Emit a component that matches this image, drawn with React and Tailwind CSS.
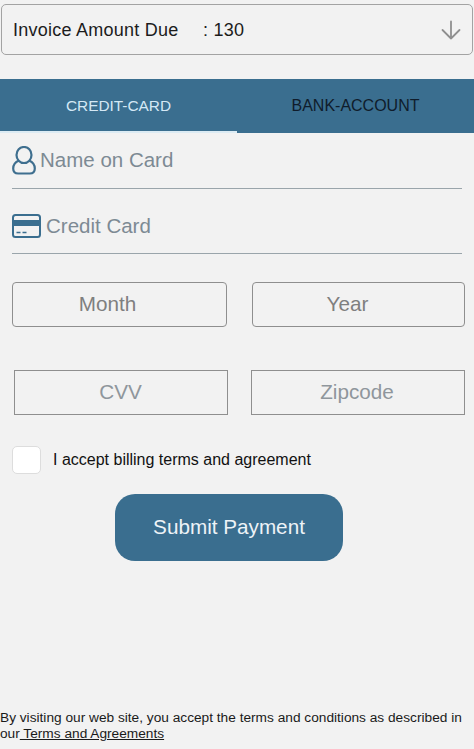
export default function App() {
  return (
    <div className="relative flex flex-col w-[474px] h-[749px] overflow-hidden bg-[#f2f2f2] font-['Liberation_Sans',Arial,sans-serif]">
      <div className="mt-[4px] mx-[1px] h-[51px] shrink-0 flex items-center justify-between pl-[11px] pr-[11px] border-[1.5px] border-[#a3a3a3] rounded-[5px] bg-[#f2f2f2]">
        <div className="flex pt-[2px] text-[18px] text-[#1c1c1c] tracking-[0.25px]">
          <span className="w-[190px]">Invoice Amount Due</span>
          <span>: 130</span>
        </div>
        <svg width="20" height="20" viewBox="0 0 20 20" fill="none" stroke="#8f8f8f" strokeWidth="1.8" strokeLinecap="round" strokeLinejoin="round">
          <path d="M10 1.5V18.5M1.5 10l8.5 8.5 8.5-8.5" />
        </svg>
      </div>

      <div className="mt-[24px] h-[54px] shrink-0 flex bg-[#3a6e8f]">
        <div className="w-[237px] h-[52px] box-content flex items-center justify-center pt-[1px] -mt-[1px] text-[15.4px] text-[#d4e8f5] border-b-[2px] border-[#dcebf3]">
          <span className="pt-[2px]">CREDIT-CARD</span>
        </div>
        <div className="flex-1 flex items-center justify-center text-[16px] text-[#0f1c2b]">BANK-ACCOUNT</div>
      </div>

      <div className="mt-[13px] mx-[12px] h-[43px] shrink-0 w-[450px] flex items-start border-b-[1.5px] border-[#9aa5ab]">
        <svg width="24" height="29" viewBox="0 0 24 29" fill="none" stroke="#3f6f8f" strokeWidth="2.2" className="shrink-0">
          <ellipse cx="12" cy="9" rx="7.5" ry="8" />
          <path d="M7 14.5C3.5 16 1.2 18.5 1.2 22.5c0 3.5 2.3 5 5 5h11.6c2.7 0 5-1.5 5-5 0-4-2.3-6.5-5.8-8" />
        </svg>
        <span className="ml-[4px] -mt-[1px] text-[20.5px] text-[#7d8a94]">Name on Card</span>
      </div>

      <div className="mt-[25px] mx-[12px] h-[40px] shrink-0 w-[450px] flex items-start border-b-[1.5px] border-[#9aa5ab]">
        <svg width="29" height="24" viewBox="0 0 29 24" className="shrink-0">
          <rect x="1" y="1" width="27" height="22" rx="2.5" fill="#f2f2f2" stroke="#3a6e8f" strokeWidth="2" />
          <rect x="1" y="6" width="27" height="6" fill="#3a6e8f" />
          <path d="M4.5 18.5h4M10.5 18.5h4" stroke="#3a6e8f" strokeWidth="1.6" />
        </svg>
        <span className="ml-[5px] -mt-[3px] text-[20.5px] text-[#7d8a94]">Credit Card</span>
      </div>

      <div className="mt-[28px] pl-[12px] h-[45px] shrink-0 flex">
        <div className="w-[215px] flex items-center justify-center pr-[24px] pb-[2px] border-[1.5px] border-[#8f8f8f] rounded-[4px] text-[20.7px] text-[#7f7f7f]">Month</div>
        <div className="ml-[25px] w-[213px] flex items-center justify-center pr-[22px] pb-[2px] border-[1.5px] border-[#8f8f8f] rounded-[4px] text-[20.7px] text-[#7f7f7f]">Year</div>
      </div>

      <div className="mt-[43px] pl-[14px] h-[45px] shrink-0 flex">
        <div className="w-[214px] flex items-center justify-center pb-[2px] border-[1.5px] border-[#8f8f8f] text-[20.7px] text-[#8f969c] pr-[1px]">CVV</div>
        <div className="ml-[23px] w-[214px] flex items-center justify-center pb-[2px] pr-[2px] border-[1.5px] border-[#8f8f8f] text-[20.7px] text-[#8f969c]">Zipcode</div>
      </div>

      <div className="mt-[31px] pl-[12px] h-[28px] shrink-0 flex items-center">
        <div className="w-[29px] h-[28px] bg-white border-[1.5px] border-[#dddddd] rounded-[5px] shrink-0" />
        <span className="ml-[12px] text-[16px] text-[#111111]">I accept billing terms and agreement</span>
      </div>

      <div className="mt-[20px] ml-[115px] w-[228px] h-[67px] shrink-0 flex items-center justify-center pb-[2px] bg-[#3a6e8f] rounded-[20px] text-[20.7px] text-[#edf3f7]">Submit Payment</div>

      <div className="mt-auto mb-[7px] text-[13.7px] leading-[16px] text-[#1a1a1a]">
        By visiting our web site, you accept the terms and conditions as described in our<span className="underline"> Terms and Agreements</span>
      </div>
    </div>
  );
}
